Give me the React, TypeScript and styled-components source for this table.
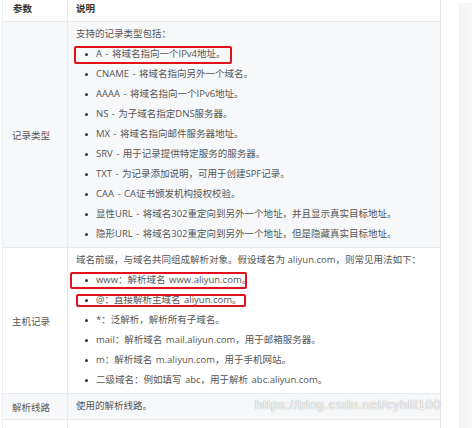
import styled, { createGlobalStyle } from "styled-components";

const GlobalStyle = createGlobalStyle`
  html, body {
    margin: 0;
    padding: 0;
    background: #ffffff;
  }
  body {
    font-family: "Open Sans", "Noto Sans CJK SC", sans-serif;
    width: 474px;
    height: 428px;
    overflow: hidden;
  }
`;

const Page = styled.div`
  position: relative;
  display: flex;
  align-items: stretch;
  height: 428px;
  padding-left: 2px;
  overflow: hidden;
`;

const Table = styled.div`
  width: 437px;
  border-left: 1px solid #ebedf0;
  border-right: 1px solid #e6e8eb;
  display: flex;
  flex-direction: column;
`;

const Row = styled.div<{ $shade?: boolean }>`
  display: grid;
  grid-template-columns: 65px 1fr;
  background: ${(p) => (p.$shade ? "#f7f8fa" : "#ffffff")};
  border-bottom: 1px solid #e8eaed;
`;

const HeadCell = styled.div<{ $first?: boolean }>`
  padding: 0 0 4px ${(p) => (p.$first ? "10px" : "8px")};
  line-height: 17px;
  font-size: 9.5px;
  font-weight: 600;
  color: #333333;
  border-right: ${(p) => (p.$first ? "1px solid #e8eaed" : "none")};
`;

const LabelCell = styled.div`
  display: flex;
  align-items: center;
  padding-left: 9px;
  font-size: 9.5px;
  color: #555555;
  border-right: 1px solid #e8eaed;
`;

const ContentCell = styled.div`
  padding: 2px 0 3px 8px;
  font-size: 9.5px;
  line-height: 20px;
  color: #555555;
`;

const List = styled.ul`
  list-style: none;
  margin: 0;
  padding: 0;
`;

const Item = styled.li`
  position: relative;
  padding-left: 20px;
  white-space: nowrap;
  word-spacing: 1px;

  &::before {
    content: "";
    position: absolute;
    left: 9px;
    top: 9px;
    width: 3px;
    height: 3px;
    border-radius: 50%;
    background: #333333;
  }
`;

const Highlight = styled.span<{ $l: number; $t: number; $w: number; $h: number }>`
  position: absolute;
  left: ${(p) => p.$l}px;
  top: ${(p) => p.$t}px;
  width: ${(p) => p.$w}px;
  height: ${(p) => p.$h}px;
  box-sizing: border-box;
  border: 2px solid #e3111b;
  border-radius: 2px;
  pointer-events: none;
`;

const Filler = styled.div`
  height: 20px;
`;

const ScrollStrip = styled.div`
  margin: 3px 0 0 18px;
  width: 13px;
  background: linear-gradient(90deg, #f3f4f5, #f7f7f8);
`;

const Watermark = styled.div`
  position: absolute;
  left: 255px;
  top: 397px;
  font-family: "Liberation Sans", Arial, sans-serif;
  font-size: 13px;
  letter-spacing: 0.5px;
  color: rgba(255, 255, 255, 0.92);
  text-shadow: 0 0 1px rgba(0, 0, 0, 0.35), 0 0 2px rgba(0, 0, 0, 0.15);
  white-space: nowrap;
  pointer-events: none;
`;

type Box = { l: number; t: number; w: number; h: number };
type Entry = { text: string; box?: Box };

const recordTypes: Entry[] = [
  { text: "A - 将域名指向一个IPv4地址。", box: { l: -2, t: 2, w: 158, h: 18 } },
  { text: "CNAME - 将域名指向另外一个域名。" },
  { text: "AAAA - 将域名指向一个IPv6地址。" },
  { text: "NS - 为子域名指定DNS服务器。" },
  { text: "MX - 将域名指向邮件服务器地址。" },
  { text: "SRV - 用于记录提供特定服务的服务器。" },
  { text: "TXT - 为记录添加说明，可用于创建SPF记录。" },
  { text: "CAA - CA证书颁发机构授权校验。" },
  { text: "显性URL - 将域名302重定向到另外一个地址，并且显示真实目标地址。" },
  { text: "隐形URL - 将域名302重定向到另外一个地址，但是隐藏真实目标地址。" },
];

const hostRecords: Entry[] = [
  { text: "www：解析域名 www.aliyun.com。", box: { l: -6, t: 2, w: 177, h: 17 } },
  { text: "@：直接解析主域名 aliyun.com。", box: { l: 0, t: 4, w: 170, h: 13 } },
  { text: "*：泛解析，解析所有子域名。" },
  { text: "mail：解析域名 mail.aliyun.com，用于邮箱服务器。" },
  { text: "m：解析域名 m.aliyun.com，用于手机网站。" },
  { text: "二级域名：例如填写 abc，用于解析 abc.aliyun.com。" },
];

const Bullets = ({ items }: { items: Entry[] }) => (
  <List>
    {items.map((it) => (
      <Item key={it.text}>
        {it.text}
        {it.box && <Highlight $l={it.box.l} $t={it.box.t} $w={it.box.w} $h={it.box.h} />}
      </Item>
    ))}
  </List>
);

export default function App() {
  return (
    <>
      <GlobalStyle />
      <Page>
        <Table>
          <Row>
            <HeadCell $first>参数</HeadCell>
            <HeadCell>说明</HeadCell>
          </Row>
          <Row $shade>
            <LabelCell>记录类型</LabelCell>
            <ContentCell>
              支持的记录类型包括：
              <Bullets items={recordTypes} />
            </ContentCell>
          </Row>
          <Row>
            <LabelCell>主机记录</LabelCell>
            <ContentCell>
              域名前缀，与域名共同组成解析对象。假设域名为 aliyun.com，则常见用法如下：
              <Bullets items={hostRecords} />
            </ContentCell>
          </Row>
          <Row $shade>
            <LabelCell>解析线路</LabelCell>
            <ContentCell>使用的解析线路。</ContentCell>
          </Row>
          <Row>
            <LabelCell />
            <Filler />
          </Row>
        </Table>
        <ScrollStrip />
        <Watermark>https://blog.csdn.net/cyhlll100</Watermark>
      </Page>
    </>
  );
}
